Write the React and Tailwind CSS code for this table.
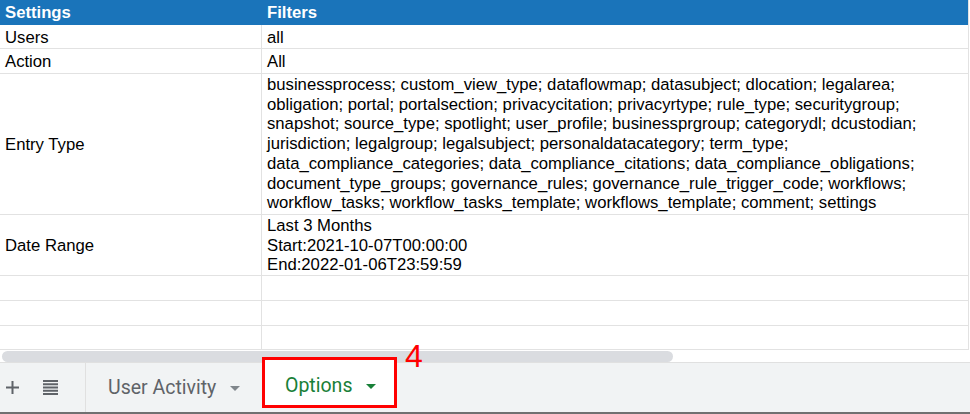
import React from 'react';

const entryLines = [
  'businessprocess; custom_view_type; dataflowmap; datasubject; dlocation; legalarea;',
  'obligation; portal; portalsection; privacycitation; privacyrtype; rule_type; securitygroup;',
  'snapshot; source_type; spotlight; user_profile; businessprgroup; categorydl; dcustodian;',
  'jurisdiction; legalgroup; legalsubject; personaldatacategory; term_type;',
  'data_compliance_categories; data_compliance_citations; data_compliance_obligations;',
  'document_type_groups; governance_rules; governance_rule_trigger_code; workflows;',
  'workflow_tasks; workflow_tasks_template; workflows_template; comment; settings',
];

const dateLines = ['Last 3 Months', 'Start:2021-10-07T00:00:00', 'End:2022-01-06T23:59:59'];

const Row = ({ h, label, children, top }) => (
  <div className={`flex border-b border-[#e2e2e2] ${h}`}>
    <div className="w-[262px] shrink-0 border-r border-[#e2e2e2] flex items-center pl-[5px] pt-[2px]">
      {label}
    </div>
    <div className={`flex-1 flex pl-[5px] ${top ? 'items-start pt-[1px]' : 'items-center pt-[2px]'}`}>
      {children}
    </div>
  </div>
);

const Caret = ({ color }) => (
  <svg width="10" height="5" viewBox="0 0 10 5" className={color}>
    <path d="M0 0h10L5 5z" fill="currentColor" />
  </svg>
);

export default function App() {
  return (
    <div className="w-[970px] h-[414px] bg-white overflow-hidden flex flex-col text-black" style={{ fontFamily: '"Liberation Sans", Arial, sans-serif' }}>
      <div className="w-[969px] border-r border-[#e2e2e2] text-[16.7px] leading-[19.7px]">
        <div className="flex h-[25px] bg-[#1a74ba] text-white font-bold">
          <div className="w-[262px] shrink-0 pl-[5px] flex items-center">Settings</div>
          <div className="flex-1 pl-[5px] flex items-center">Filters</div>
        </div>
        <Row h="h-[24px]" label="Users">all</Row>
        <Row h="h-[25px]" label="Action">All</Row>
        <Row h="h-[141px]" label="Entry Type" top>
          <div>
            {entryLines.map((l, i) => (
              <div key={i} className="whitespace-nowrap">{l}</div>
            ))}
          </div>
        </Row>
        <Row h="h-[61px]" label="Date Range" top>
          <div>
            {dateLines.map((l, i) => (
              <div key={i} className="whitespace-nowrap">{l}</div>
            ))}
          </div>
        </Row>
        <Row h="h-[25px]" label="" />
        <Row h="h-[25px]" label="" />
        <Row h="h-[24px]" label="" />
      </div>

      <div className="h-[13px] border-b border-[#e0e0e0] flex items-center px-[2px]">
        <div className="w-[671px] h-[11px] rounded-full bg-[#dadce0]" />
      </div>

      <div className="relative flex-1 bg-[#f1f3f4] border-b-2 border-[#707070] flex items-stretch" style={{ fontFamily: 'Roboto, "Open Sans", sans-serif' }}>
        <div className="w-[86px] shrink-0 border-r border-[#e0e0e0] flex items-center">
          <svg width="13" height="13" viewBox="0 0 13 13" className="ml-[6px] text-[#5f6368]">
            <path d="M6.5 0v13M0 6.5h13" stroke="currentColor" strokeWidth="2" />
          </svg>
          <svg width="15" height="15" viewBox="0 0 15 15" className="ml-[24px] mb-[1px] text-[#5f6368]">
            <path d="M0 1h15M0 4.25h15M0 7.5h15M0 10.75h15M0 14h15" stroke="currentColor" strokeWidth="2" />
          </svg>
        </div>
        <div className="w-[176px] shrink-0 flex items-center pl-[22px] text-[19.5px] text-[#5f6368]">
          <span>User Activity</span>
          <span className="ml-[14px] mt-[1px]"><Caret color="text-[#80868b]" /></span>
        </div>
        <div className="relative w-[135px] shrink-0 mt-[-6px] mb-[4px] bg-white border-[3px] border-[#ff0000] flex items-center pl-[20px] pt-[7px] text-[19.5px] text-[#188038]">
          <span>Options</span>
          <span className="ml-[14px] mt-[1px]"><Caret color="text-[#188038]" /></span>
        </div>
        <div className="absolute left-[405px] top-[-23px] text-[32px] leading-none text-[#ff0000]" style={{ fontFamily: '"Liberation Sans", Arial, sans-serif' }}>
          4
        </div>
      </div>
    </div>
  );
}
